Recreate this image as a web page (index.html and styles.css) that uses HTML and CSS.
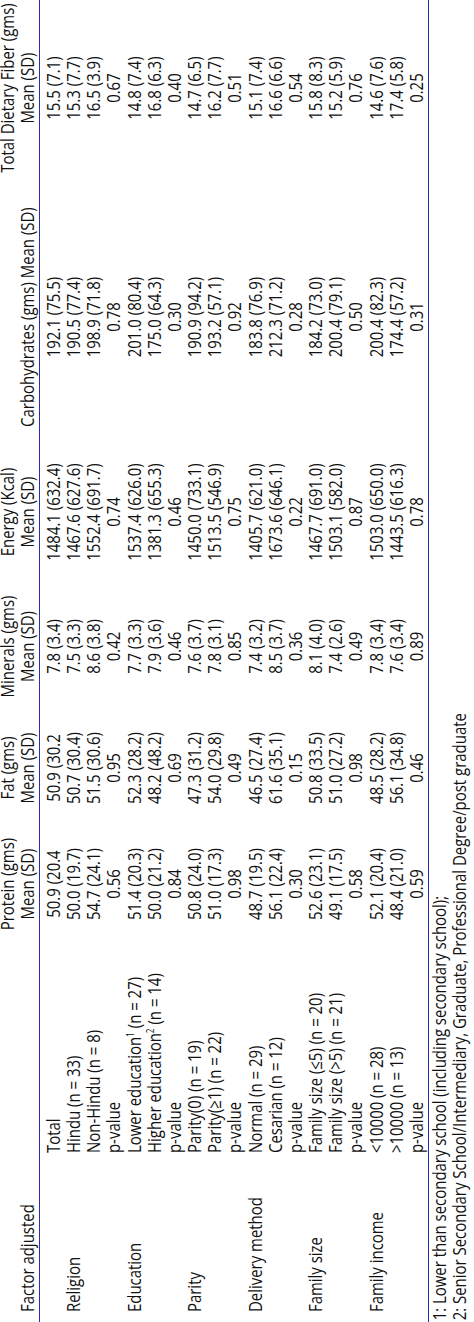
FILE: index.html
```html
<!DOCTYPE html>
<html lang="en">
<head>
<meta charset="utf-8">
<title>Nutrient intake by factor</title>
<link rel="stylesheet" href="styles.css">
</head>
<body>
<div class="page">
  <div class="sheet">
    <div class="row head">
      <div class="cell left">Factor adjusted</div>
      <div class="cell left"></div>
      <div class="cell"><span class="h1">Protein (gms)</span><span class="h2">Mean (SD)</span></div>
      <div class="cell"><span class="h1">Fat (gms)</span><span class="h2">Mean (SD)</span></div>
      <div class="cell"><span class="h1">Minerals (gms)</span><span class="h2">Mean (SD)</span></div>
      <div class="cell"><span class="h1">Energy (Kcal)</span><span class="h2">Mean (SD)</span></div>
      <div class="cell">Carbohydrates (gms) Mean (SD)</div>
      <div class="cell"><span class="h1">Total Dietary Fiber (gms)</span><span class="h2">Mean (SD)</span></div>
    </div>
    <div class="body">
      <div class="row"><div class="cell left"></div><div class="cell left">Total</div><div class="cell">50.9 (20.4</div><div class="cell">50.9 (30.2</div><div class="cell">7.8 (3.4)</div><div class="cell">1484.1 (632.4)</div><div class="cell">192.1 (75.5)</div><div class="cell">15.5 (7.1)</div></div>
      <div class="row"><div class="cell left">Religion</div><div class="cell left">Hindu (n = 33)</div><div class="cell">50.0 (19.7)</div><div class="cell">50.7 (30.4)</div><div class="cell">7.5 (3.3)</div><div class="cell">1467.6 (627.6)</div><div class="cell">190.5 (77.4)</div><div class="cell">15.3 (7.7)</div></div>
      <div class="row"><div class="cell left"></div><div class="cell left">Non-Hindu (n = 8)</div><div class="cell">54.7 (24.1)</div><div class="cell">51.5 (30.6)</div><div class="cell">8.6 (3.8)</div><div class="cell">1552.4 (691.7)</div><div class="cell">198.9 (71.8)</div><div class="cell">16.5 (3.9)</div></div>
      <div class="row"><div class="cell left"></div><div class="cell left">p-value</div><div class="cell">0.56</div><div class="cell">0.95</div><div class="cell">0.42</div><div class="cell">0.74</div><div class="cell">0.78</div><div class="cell">0.67</div></div>
      <div class="row"><div class="cell left">Education</div><div class="cell left">Lower education<sup>1</sup> (n = 27)</div><div class="cell">51.4 (20.3)</div><div class="cell">52.3 (28.2)</div><div class="cell">7.7 (3.3)</div><div class="cell">1537.4 (626.0)</div><div class="cell">201.0 (80.4)</div><div class="cell">14.8 (7.4)</div></div>
      <div class="row"><div class="cell left"></div><div class="cell left">Higher education<sup>2</sup> (n = 14)</div><div class="cell">50.0 (21.2)</div><div class="cell">48.2 (48.2)</div><div class="cell">7.9 (3.6)</div><div class="cell">1381.3 (655.3)</div><div class="cell">175.0 (64.3)</div><div class="cell">16.8 (6.3)</div></div>
      <div class="row"><div class="cell left"></div><div class="cell left">p-value</div><div class="cell">0.84</div><div class="cell">0.69</div><div class="cell">0.46</div><div class="cell">0.46</div><div class="cell">0.30</div><div class="cell">0.40</div></div>
      <div class="row"><div class="cell left">Parity</div><div class="cell left">Parity(0) (n = 19)</div><div class="cell">50.8 (24.0)</div><div class="cell">47.3 (31.2)</div><div class="cell">7.6 (3.7)</div><div class="cell">1450.0 (733.1)</div><div class="cell">190.9 (94.2)</div><div class="cell">14.7 (6.5)</div></div>
      <div class="row"><div class="cell left"></div><div class="cell left">Parity(≥1) (n = 22)</div><div class="cell">51.0 (17.3)</div><div class="cell">54.0 (29.8)</div><div class="cell">7.8 (3.1)</div><div class="cell">1513.5 (546.9)</div><div class="cell">193.2 (57.1)</div><div class="cell">16.2 (7.7)</div></div>
      <div class="row"><div class="cell left"></div><div class="cell left">p-value</div><div class="cell">0.98</div><div class="cell">0.49</div><div class="cell">0.85</div><div class="cell">0.75</div><div class="cell">0.92</div><div class="cell">0.51</div></div>
      <div class="row"><div class="cell left">Delivery method</div><div class="cell left">Normal (n = 29)</div><div class="cell">48.7 (19.5)</div><div class="cell">46.5 (27.4)</div><div class="cell">7.4 (3.2)</div><div class="cell">1405.7 (621.0)</div><div class="cell">183.8 (76.9)</div><div class="cell">15.1 (7.4)</div></div>
      <div class="row"><div class="cell left"></div><div class="cell left">Cesarian (n = 12)</div><div class="cell">56.1 (22.4)</div><div class="cell">61.6 (35.1)</div><div class="cell">8.5 (3.7)</div><div class="cell">1673.6 (646.1)</div><div class="cell">212.3 (71.2)</div><div class="cell">16.6 (6.6)</div></div>
      <div class="row"><div class="cell left"></div><div class="cell left">p-value</div><div class="cell">0.30</div><div class="cell">0.15</div><div class="cell">0.36</div><div class="cell">0.22</div><div class="cell">0.28</div><div class="cell">0.54</div></div>
      <div class="row"><div class="cell left">Family size</div><div class="cell left">Family size (≤5) (n = 20)</div><div class="cell">52.6 (23.1)</div><div class="cell">50.8 (33.5)</div><div class="cell">8.1 (4.0)</div><div class="cell">1467.7 (691.0)</div><div class="cell">184.2 (73.0)</div><div class="cell">15.8 (8.3)</div></div>
      <div class="row"><div class="cell left"></div><div class="cell left">Family size (&gt;5) (n = 21)</div><div class="cell">49.1 (17.5)</div><div class="cell">51.0 (27.2)</div><div class="cell">7.4 (2.6)</div><div class="cell">1503.1 (582.0)</div><div class="cell">200.4 (79.1)</div><div class="cell">15.2 (5.9)</div></div>
      <div class="row"><div class="cell left"></div><div class="cell left">p-value</div><div class="cell">0.58</div><div class="cell">0.98</div><div class="cell">0.49</div><div class="cell">0.87</div><div class="cell">0.50</div><div class="cell">0.76</div></div>
      <div class="row"><div class="cell left">Family income</div><div class="cell left">&lt;10000 (n = 28)</div><div class="cell">52.1 (20.4)</div><div class="cell">48.5 (28.2)</div><div class="cell">7.8 (3.4)</div><div class="cell">1503.0 (650.0)</div><div class="cell">200.4 (82.3)</div><div class="cell">14.6 (7.6)</div></div>
      <div class="row"><div class="cell left"></div><div class="cell left">&gt;10000 (n = 13)</div><div class="cell">48.4 (21.0)</div><div class="cell">56.1 (34.8)</div><div class="cell">7.6 (3.4)</div><div class="cell">1443.5 (616.3)</div><div class="cell">174.4 (57.2)</div><div class="cell">17.4 (5.8)</div></div>
      <div class="row"><div class="cell left"></div><div class="cell left">p-value</div><div class="cell">0.59</div><div class="cell">0.46</div><div class="cell">0.89</div><div class="cell">0.78</div><div class="cell">0.31</div><div class="cell">0.25</div></div>
    </div>
    <div class="notes">
      <div class="note">1: Lower than secondary school (including secondary school);</div>
      <div class="note">2: Senior Secondary School/Intermediary, Graduate, Professional Degree/post graduate</div>
    </div>
  </div>
</div>
</body>
</html>
```
FILE: styles.css
```css
html, body {
  margin: 0;
  padding: 0;
  background: #ffffff;
  overflow: hidden;
}

.page {
  width: 474px;
  height: 1322px;
  overflow: hidden;
  background: #ffffff;
}

.sheet {
  width: 1614px;
  height: 474px;
  transform-origin: 0 0;
  transform: translateY(1322px) rotate(-90deg) scaleX(0.83);
  font-family: "Open Sans", "Noto Sans", sans-serif;
  font-size: 18px;
  line-height: 20.17px;
  color: #111111;
}

.row {
  display: grid;
  grid-template-columns: 191.6px 254.2px 139.8px 139.8px 153px 171px 298.8px 253px;
  padding-left: 12px;
}

.cell {
  white-space: nowrap;
  text-align: center;
}

.cell.left {
  text-align: left;
}

.head {
  padding-bottom: 1.9px;
  border-bottom: 1px solid #2b2bb8;
  align-items: end;
}

.h1 {
  display: block;
  line-height: 14px;
}

.h2 {
  display: block;
  margin-top: 3.4px;
}

.body {
  padding-top: 2.4px;
  padding-bottom: 1.4px;
  border-bottom: 1px solid #2b2bb8;
}

sup {
  font-size: 10px;
  line-height: 0;
  vertical-align: 7px;
}

.notes {
  padding-left: 2px;
}

.note {
  white-space: nowrap;
}
```
